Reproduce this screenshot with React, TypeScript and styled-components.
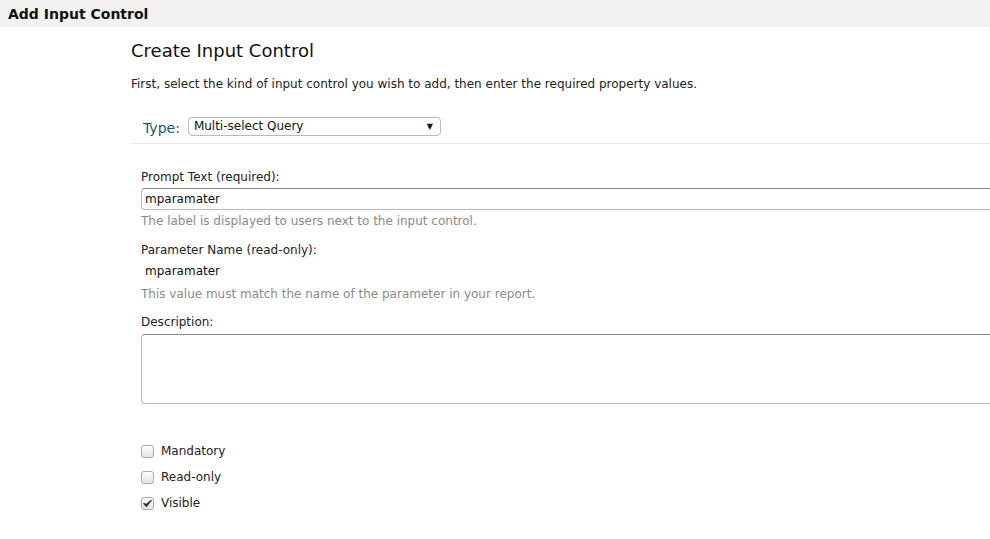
import styled, { createGlobalStyle } from "styled-components";

const GlobalStyle = createGlobalStyle`
  html, body {
    margin: 0;
    padding: 0;
    background: #fff;
    font-family: "DejaVu Sans", Verdana, sans-serif;
    color: #222;
  }
  * { box-sizing: border-box; }
`;

const Page = styled.div`
  width: 990px;
  height: 539px;
  overflow: hidden;
`;

const HeaderBar = styled.div`
  height: 27px;
  background: #f2f1ef;
  display: flex;
  align-items: center;
  padding-left: 8px;
  font-weight: bold;
  font-size: 14px;
  color: #111;
`;

const Body = styled.div`
  padding: 12px 0 0 131px;
`;

const Title = styled.h1`
  margin: 0;
  font-size: 18px;
  font-weight: normal;
  color: #111;
  line-height: 24px;
`;

const Intro = styled.p`
  margin: 14px 0 0;
  font-size: 12px;
  line-height: 15px;
  color: #222;
`;

const TypeRow = styled.div`
  display: flex;
  align-items: center;
  gap: 8px;
  margin-top: 24px;
  padding: 0 0 7px 12px;
  border-bottom: 1px solid #e6e6ec;
`;

const TypeLabel = styled.span`
  font-size: 14px;
  color: #1f4f7f;
  margin-top: 4px;
`;

const SelectBox = styled.div`
  width: 253px;
  height: 19px;
  border: 1px solid #bbb;
  border-radius: 4px;
  display: flex;
  align-items: center;
  justify-content: space-between;
  padding: 0 7px 0 5px;
  font-size: 12px;
  color: #111;
`;

const Caret = styled.span`
  font-size: 8px;
  color: #111;
`;

const Fields = styled.div`
  padding: 26px 0 0 10px;
`;

const Label = styled.div<{ $gap?: number }>`
  font-size: 12px;
  line-height: 15px;
  color: #222;
  margin-top: ${(p) => p.$gap ?? 0}px;
`;

const TextInput = styled.div`
  margin-top: 3px;
  height: 22px;
  margin-right: -10px;
  border: 1px solid #bbb;
  border-top-color: #888;
  border-right: none;
  border-radius: 4px 0 0 4px;
  padding: 0 3px;
  display: flex;
  align-items: center;
  font-size: 12px;
  color: #111;
`;

const Hint = styled.div<{ $gap?: number }>`
  margin-top: ${(p) => p.$gap ?? 4}px;
  font-size: 12px;
  line-height: 15px;
  color: #8a8a8a;
`;

const ReadOnlyValue = styled.div`
  margin-top: 6px;
  padding-left: 4px;
  font-size: 12px;
  line-height: 15px;
  color: #111;
`;

const TextArea = styled.div`
  margin-top: 4px;
  height: 70px;
  margin-right: -10px;
  border: 1px solid #bbb;
  border-top-color: #888;
  border-right: none;
  border-radius: 4px 0 0 4px;
`;

const Checks = styled.div`
  margin-top: 40px;
  display: flex;
  flex-direction: column;
  gap: 11px;
`;

const CheckRow = styled.label`
  display: flex;
  align-items: center;
  gap: 7px;
  font-size: 12px;
  line-height: 15px;
  color: #222;
`;

const Box = styled.span`
  width: 13px;
  height: 13px;
  border: 1px solid #a9a9a9;
  border-radius: 3px;
  background: linear-gradient(#fdfdfd, #e4e4e4);
  display: flex;
  align-items: center;
  justify-content: center;
`;

function Check({ label, checked }: { label: string; checked?: boolean }) {
  return (
    <CheckRow>
      <Box>
        {checked && (
          <svg width="9" height="9" viewBox="0 0 9 9">
            <path d="M0.8 4.6 L3.4 7.4 L8.2 1.4 L3.4 5.4 Z" stroke="#333" strokeWidth="1.2" fill="#333" strokeLinejoin="round" />
          </svg>
        )}
      </Box>
      {label}
    </CheckRow>
  );
}

export default function App() {
  return (
    <Page>
      <GlobalStyle />
      <HeaderBar>Add Input Control</HeaderBar>
      <Body>
        <Title>Create Input Control</Title>
        <Intro>First, select the kind of input control you wish to add, then enter the required property values.</Intro>
        <TypeRow>
          <TypeLabel>Type:</TypeLabel>
          <SelectBox>
            Multi-select Query
            <Caret>▼</Caret>
          </SelectBox>
        </TypeRow>
        <Fields>
          <Label>Prompt Text (required):</Label>
          <TextInput>mparamater</TextInput>
          <Hint>The label is displayed to users next to the input control.</Hint>
          <Label $gap={14}>Parameter Name (read-only):</Label>
          <ReadOnlyValue>mparamater</ReadOnlyValue>
          <Hint $gap={8}>This value must match the name of the parameter in your report.</Hint>
          <Label $gap={13}>Description:</Label>
          <TextArea />
          <Checks>
            <Check label="Mandatory" />
            <Check label="Read-only" />
            <Check label="Visible" checked />
          </Checks>
        </Fields>
      </Body>
    </Page>
  );
}
